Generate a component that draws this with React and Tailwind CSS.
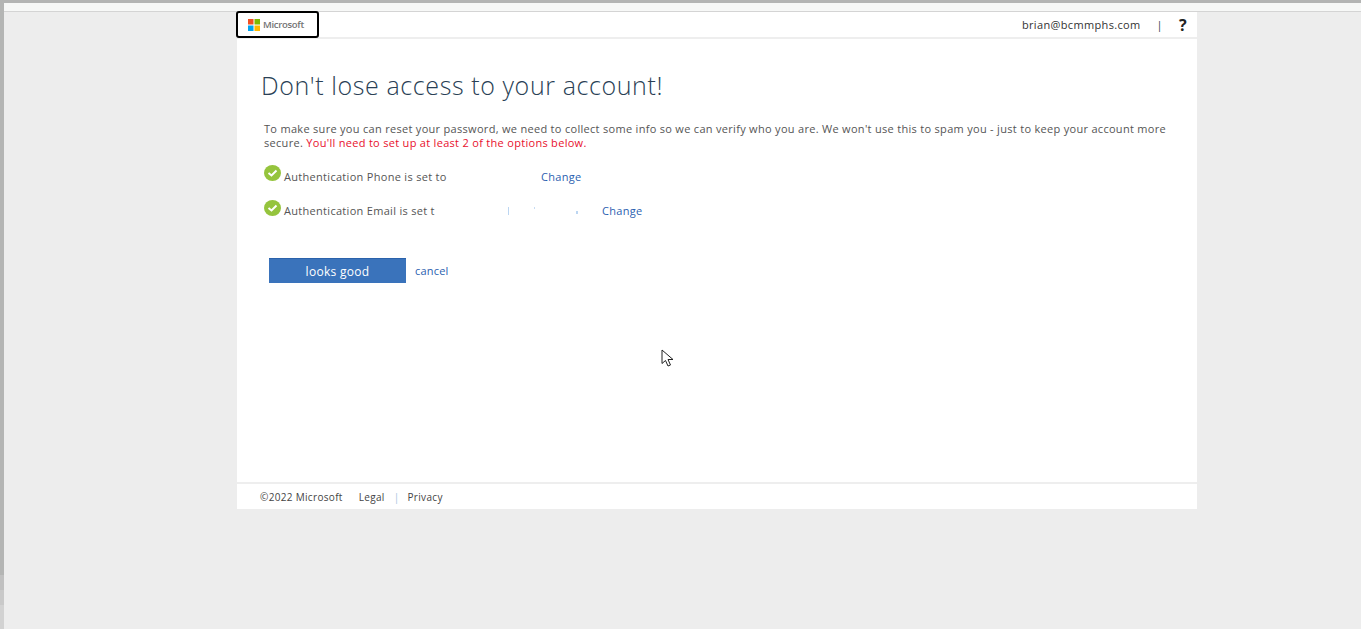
import React from 'react';

const font = { fontFamily: '"Open Sans", "Noto Sans", sans-serif' };

const MsLogo = () => (
  <svg width="12" height="12" viewBox="0 0 12 12">
    <rect x="0" y="0" width="5.5" height="5.5" fill="#f25022" />
    <rect x="6.5" y="0" width="5.5" height="5.5" fill="#7fba00" />
    <rect x="0" y="6.5" width="5.5" height="5.5" fill="#00a4ef" />
    <rect x="6.5" y="6.5" width="5.5" height="5.5" fill="#ffb900" />
  </svg>
);

const Check = () => (
  <svg width="17" height="16" viewBox="0 0 17 16" className="shrink-0">
    <ellipse cx="8.5" cy="8" rx="8.5" ry="8" fill="#95c43d" />
    <path d="M4.5 8 L7.5 10.5 L12.5 5.5" fill="none" stroke="#fff" strokeWidth="2" />
  </svg>
);

const Cursor = () => (
  <svg width="14" height="19" viewBox="0 0 14 19" className="absolute left-[661px] top-[349px]">
    <path d="M1 1 L1 14.5 L4.5 11.5 L7 17 L9.5 16 L7 10.5 L12 10.5 Z" fill="#fff" stroke="#222" strokeWidth="1" />
  </svg>
);

const App = () => {
  return (
    <div className="relative h-[629px] w-[1361px] overflow-hidden bg-[#ededed] flex" style={font}>
      <div className="w-[4px] h-full flex flex-col">
        <div className="h-[575px] bg-[#b4b5b4]" />
        <div className="h-[15px] bg-[#c0c0c0]" />
        <div className="h-[15px] bg-[#c9c9c9]" />
        <div className="flex-1 bg-[#d2d2d2]" />
      </div>
      <div className="flex-1 flex flex-col">
        <div className="h-[3px] bg-[#b4b5b4]" />
        <div className="h-[8px] bg-[#f7f8f7]" />
        <div className="h-[1px] bg-[#d4d4d4]" />
        <div className="ml-[233px] w-[960px] bg-white flex flex-col h-[497px]">
          <div className="h-[27px] border-b-2 border-[#eeeeee] flex items-start justify-between">
            <div className="w-[83px] h-[27px] border-2 border-black rounded-[3px] bg-white flex items-center pl-[10px] gap-[3px] -mt-[1px] -ml-[1px]">
              <MsLogo />
              <span className="mt-[1px] text-[9.5px] font-semibold text-[#737373] tracking-[-0.3px]">Microsoft</span>
            </div>
            <div className="flex items-center h-[26px] pr-[10px] text-[11px] text-[#333] tracking-[0.35px]">
              <span>brian@bcmmphs.com</span>
              <span className="ml-[16px] text-[#33405a]">|</span>
              <span className="ml-[16px] text-[16px] font-bold text-[#222]">?</span>
            </div>
          </div>

          <div className="flex-1 pl-[24px] pt-[27px]">
            <h1 className="text-[25px] leading-[38px] font-light text-[#2a3f55] tracking-[0.6px]">Don't lose access to your account!</h1>
            <p className="mt-[18px] ml-[3px] w-[915px] text-[11px] leading-[14px] text-[#555] tracking-[0.3px]">
              To make sure you can reset your password, we need to collect some info so we can verify who you are. We won't use this to spam you - just to keep your account more secure. <span className="text-[#e8102d]">You'll need to set up at least 2 of the options below.</span>
            </p>

            <div className="mt-[15px] ml-[3px] flex items-start h-[17px]">
              <Check />
              <span className="ml-[3px] mt-[5px] w-[257px] text-[11px] leading-[14px] text-[#555] tracking-[0.3px]">Authentication Phone is set to</span>
              <a className="mt-[5px] text-[11px] leading-[14px] text-[#2b5fb0] tracking-[0.3px]">Change</a>
            </div>
            <div className="mt-[18px] ml-[3px] flex items-start h-[17px]">
              <Check />
              <div className="ml-[3px] mt-[4px] w-[318px] flex items-start text-[11px] leading-[14px] text-[#555] tracking-[0.3px]">
                <span className="w-[224px] shrink-0">Authentication Email is set t</span>
                <span className="mt-[3px] w-[1px] h-[8px] bg-[#bcd6f2] shrink-0" />
                <span className="ml-[25px] mt-[3px] w-[1px] h-[2px] bg-[#c7dcf3] shrink-0" />
                <span className="ml-[41px] mt-[7px] w-[2px] h-[3px] bg-[#bcd6f2] shrink-0" />
              </div>
              <a className="mt-[4px] text-[11px] leading-[14px] text-[#2b5fb0] tracking-[0.3px]">Change</a>
            </div>

            <div className="mt-[41px] ml-[8px] flex items-center">
              <button className="w-[137px] h-[25px] pt-[1px] bg-[#3a73bb] border-t border-[#2a62ab] text-white text-[12px] tracking-[0.3px]">looks good</button>
              <a className="ml-[9px] mt-[2px] text-[11px] text-[#2b5fb0] tracking-[0.2px]">cancel</a>
            </div>
          </div>

          <div className="h-[27px] pt-[1px] border-t-2 border-[#eeeeee] flex items-center pl-[23px] text-[10px] text-[#444] tracking-[0.32px]">
            <span>©2022 Microsoft</span>
            <a className="ml-[16px]">Legal</a>
            <span className="ml-[9px] text-[#9fc5e0]">|</span>
            <a className="ml-[8px]">Privacy</a>
          </div>
        </div>
      </div>
      <Cursor />
    </div>
  );
};

export default App;
